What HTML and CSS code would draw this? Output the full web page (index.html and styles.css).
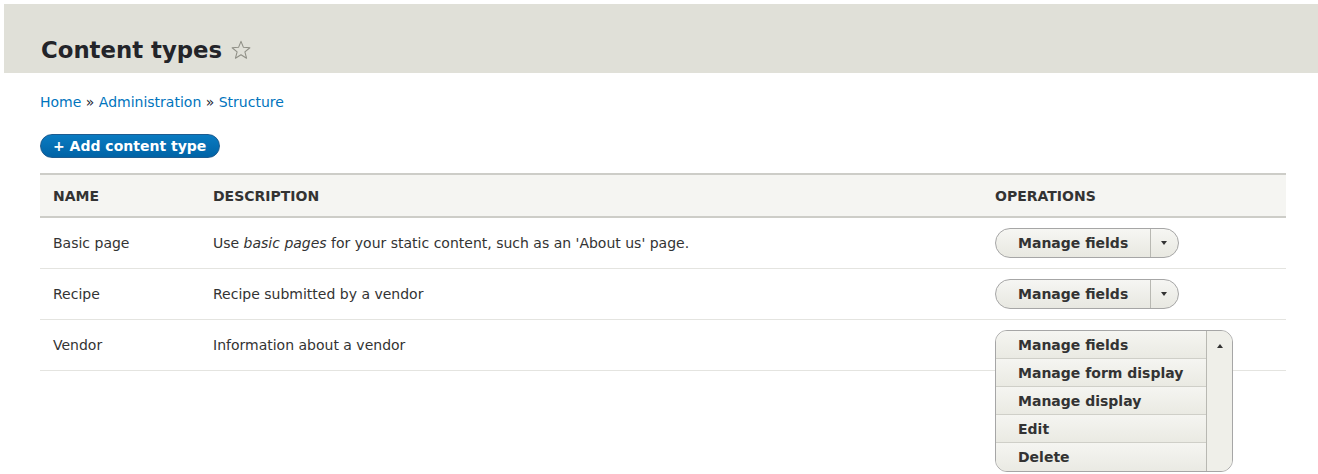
FILE: index.html
```html
<!DOCTYPE html>
<html lang="en">
<head>
<meta charset="utf-8">
<title>Content types</title>
<link rel="stylesheet" href="styles.css">
</head>
<body>
<header class="page-header">
  <h1 class="page-title">Content types <span class="shortcut"><svg width="20" height="20" viewBox="0 0 18 18"><polygon points="9,1.2 11.2,6.6 17,7 12.5,10.7 14,16.4 9,13.3 4,16.4 5.5,10.7 1,7 6.8,6.6" fill="none" stroke="#8f8f86" stroke-width="0.95" stroke-linejoin="round"/></svg></span></h1>
</header>
<main class="page-content">
  <nav class="breadcrumb"><a href="#">Home</a> » <a href="#">Administration</a> » <a href="#">Structure</a></nav>
  <div class="actions"><a class="button-primary" href="#">+ Add content type</a></div>
  <div class="types-table" role="table">
    <div class="row head" role="row">
      <div class="cell" role="columnheader">Name</div>
      <div class="cell" role="columnheader">Description</div>
      <div class="cell" role="columnheader">Operations</div>
    </div>
    <div class="row" role="row">
      <div class="cell" role="cell">Basic page</div>
      <div class="cell" role="cell">Use <em>basic pages</em> for your static content, such as an 'About us' page.</div>
      <div class="cell" role="cell"><div class="dropbutton"><a class="dropbutton-main" href="#">Manage fields</a><span class="dropbutton-toggle"><span class="arrow-down"></span></span></div></div>
    </div>
    <div class="row" role="row">
      <div class="cell" role="cell">Recipe</div>
      <div class="cell" role="cell">Recipe submitted by a vendor</div>
      <div class="cell" role="cell"><div class="dropbutton"><a class="dropbutton-main" href="#">Manage fields</a><span class="dropbutton-toggle"><span class="arrow-down"></span></span></div></div>
    </div>
    <div class="row" role="row">
      <div class="cell" role="cell">Vendor</div>
      <div class="cell" role="cell">Information about a vendor</div>
      <div class="cell" role="cell">
        <div class="dropbutton-wrapper">
          <div class="dropbutton-open">
            <ul class="dropbutton-list">
              <li><a href="#">Manage fields</a></li>
              <li><a href="#">Manage form display</a></li>
              <li><a href="#">Manage display</a></li>
              <li><a href="#">Edit</a></li>
              <li><a href="#">Delete</a></li>
            </ul>
            <span class="dropbutton-toggle-open"><span class="arrow-up"></span></span>
          </div>
        </div>
      </div>
    </div>
  </div>
</main>
</body>
</html>
```
FILE: styles.css
```css
html, body {
  margin: 0;
  padding: 0;
}
html {
  min-height: 100%;
  background: #fff;
}
body {
  margin: 4px 0 0 4px;
  min-height: calc(100vh - 4px);
  font-family: "DejaVu Sans", "Liberation Sans", sans-serif;
  font-size: 14px;
  color: #222330;
  background: #fff;
}
a {
  color: #0074bd;
  text-decoration: none;
}
.page-header {
  background: #e0e0d8;
  height: 69px;
  padding: 0 0 0 37px;
  box-sizing: border-box;
  display: flex;
  align-items: flex-end;
}
.page-title {
  margin: 0 0 9px 0;
  font-size: 22.8px;
  font-weight: bold;
  color: #232429;
  line-height: 1.2;
  display: flex;
  align-items: center;
  gap: 9px;
}
.shortcut {
  display: inline-flex;
  width: 20px;
  height: 20px;
  margin-top: -1px;
}
.page-content {
  padding: 0 32px 0 36px;
}
.breadcrumb {
  margin-top: 20px;
  font-size: 14px;
  line-height: 18px;
}
.actions {
  margin-top: 23px;
  height: 24px;
}
.button-primary {
  display: inline-block;
  height: 24px;
  line-height: 22px;
  padding: 0 13px 0 12px;
  border-radius: 12px;
  background: linear-gradient(to bottom, #0a7bc1, #0063a6);
  border: 1px solid #1e5c90;
  box-sizing: border-box;
  color: #fff;
  font-weight: bold;
  font-size: 14px;
}
.types-table {
  margin-top: 15px;
}
.row {
  display: grid;
  grid-template-columns: 160px 782px 1fr;
  height: 51px;
  box-sizing: border-box;
  border-bottom: 1px solid #e4e4e0;
  align-items: center;
  color: #333;
}
.row.head {
  background: #f5f5f2;
  height: 45px;
  border-top: 2px solid #cdcdc8;
  border-bottom: 2px solid #cdcdc8;
  text-transform: uppercase;
  font-weight: bold;
}
.cell {
  padding: 0 13px;
}
.dropbutton {
  display: inline-flex;
  height: 30px;
  box-sizing: border-box;
  border: 1px solid #a6a6a6;
  border-radius: 15px;
  background: linear-gradient(to bottom, #f6f6f3, #e8e8e1);
  overflow: hidden;
  vertical-align: middle;
}
.dropbutton-main {
  display: block;
  width: 154px;
  box-sizing: border-box;
  padding-left: 22px;
  line-height: 28px;
  color: #333;
  font-weight: bold;
}
.dropbutton-toggle {
  width: 28px;
  border-left: 1px solid #b8b8b2;
  display: flex;
  align-items: center;
  justify-content: center;
  padding-right: 2px;
  box-sizing: border-box;
}
.arrow-down {
  width: 0;
  height: 0;
  border-left: 3.5px solid transparent;
  border-right: 3.5px solid transparent;
  border-top: 4px solid #333;
}
.arrow-up {
  width: 0;
  height: 0;
  border-left: 3.5px solid transparent;
  border-right: 3.5px solid transparent;
  border-bottom: 4px solid #333;
}
.dropbutton-wrapper {
  position: relative;
  height: 30px;
}
.dropbutton-open {
  position: absolute;
  top: 0;
  left: 0;
  display: flex;
  border: 1px solid #a6a6a6;
  border-radius: 12px;
  background: #eeeee8;
  overflow: hidden;
  z-index: 2;
}
.dropbutton-list {
  list-style: none;
  margin: 0;
  padding: 0;
  width: 210px;
}
.dropbutton-list li {
  height: 28px;
  box-sizing: border-box;
  border-bottom: 1px solid #cfcfc8;
  background: linear-gradient(to bottom, #f5f5f1, #eaeae3);
}
.dropbutton-list li:last-child {
  border-bottom: 0;
}
.dropbutton-list a {
  display: block;
  padding: 1px 0 0 22px;
  line-height: 27px;
  color: #333;
  font-weight: bold;
}
.dropbutton-toggle-open {
  width: 26px;
  border-left: 1px solid #b8b8b2;
  background: #efefe9;
  display: flex;
  justify-content: center;
  align-items: flex-start;
  padding-top: 13px;
  box-sizing: border-box;
}
```
